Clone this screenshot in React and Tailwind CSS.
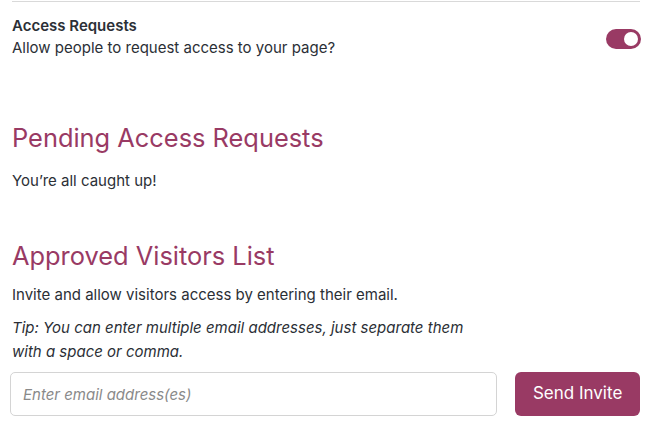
export default function App() {
  return (
    <div className="w-[652px] h-[448px] bg-white overflow-hidden" style={{ fontFamily: "Inter, 'Noto Sans', sans-serif" }}>
      <div className="mx-3 h-px bg-[#d9d9d9] mt-px" />
      <div className="px-3 pt-[14px] flex items-start justify-between text-[#2b2f36]">
        <div>
          <div className="text-[15px] font-semibold leading-5">Access Requests</div>
          <div className="text-[15px] leading-6">Allow people to request access to your page?</div>
        </div>
        <div className="mt-[13px] mr-[-1px] w-[35px] h-[20px] rounded-full bg-[#993a64] flex items-center justify-end pr-[3px]">
          <div className="w-[14px] h-[14px] rounded-full bg-white" />
        </div>
      </div>
      <div className="px-3">
        <h2 className="mt-[62px] text-[25.4px] leading-8 text-[#993a64]">Pending Access Requests</h2>
        <p className="mt-[15px] text-[15px] leading-6 text-[#2b2f36]">You’re all caught up!</p>
        <h2 className="mt-[47px] text-[25.4px] leading-8 text-[#993a64]">Approved Visitors List</h2>
        <p className="mt-[11px] text-[15px] leading-6 text-[#2b2f36]">Invite and allow visitors access by entering their email.</p>
        <p className="mt-[9px] w-[460px] text-[15px] leading-6 italic text-[#2b2f36]">Tip: You can enter multiple email addresses, just separate them with a space or comma.</p>
        <div className="mt-[8px] flex gap-[18px]">
          <input
            className="w-[488px] -ml-[2px] h-[44px] rounded-[5px] border border-[#d4d4d4] px-[12px] text-[15px] italic placeholder:text-[#8a8a8a] outline-none"
            placeholder="Enter email address(es)"
          />
          <button className="w-[125px] h-[44px] rounded-[6px] bg-[#993a64] text-white text-[17px]">Send Invite</button>
        </div>
      </div>
    </div>
  );
}
